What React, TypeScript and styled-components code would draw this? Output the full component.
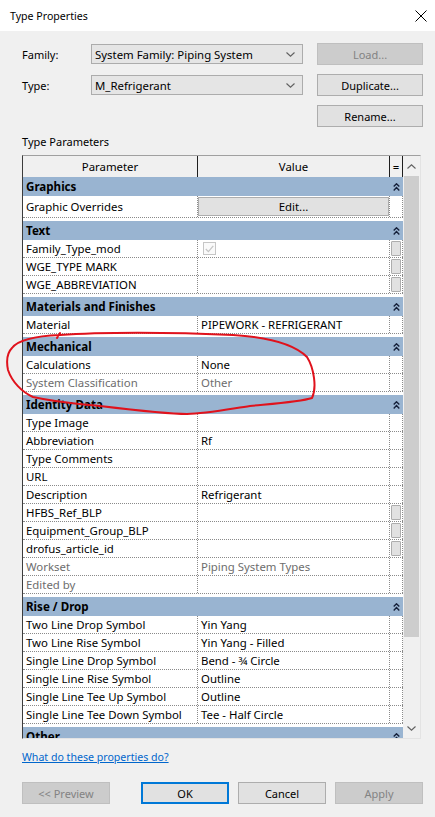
import styled, { createGlobalStyle } from 'styled-components';

const GlobalStyle = createGlobalStyle`
  *, *::before, *::after {
    box-sizing: border-box;
  }
  html, body {
    margin: 0;
    padding: 0;
    background: #f0f0f0;
  }
  body {
    font-family: 'Noto Sans', 'Open Sans', sans-serif;
    font-size: 11.4px;
    color: #000;
  }
`;

type Row = {
    name: string;
    value?: string;
    muted?: boolean;
    eqButton?: boolean;
    checkbox?: boolean;
    editButton?: boolean;
};

type Group = {
    title: string;
    rows: Row[];
};

const groups: Group[] = [
    { title: 'Graphics', rows: [{ name: 'Graphic Overrides', editButton: true }] },
    {
        title: 'Text',
        rows: [
            { name: 'Family_Type_mod', checkbox: true, eqButton: true },
            { name: 'WGE_TYPE MARK', eqButton: true },
            { name: 'WGE_ABBREVIATION', eqButton: true },
        ],
    },
    {
        title: 'Materials and Finishes',
        rows: [{ name: 'Material', value: 'PIPEWORK - REFRIGERANT' }],
    },
    {
        title: 'Mechanical',
        rows: [
            { name: 'Calculations', value: 'None' },
            { name: 'System Classification', value: 'Other', muted: true },
        ],
    },
    {
        title: 'Identity Data',
        rows: [
            { name: 'Type Image' },
            { name: 'Abbreviation', value: 'Rf' },
            { name: 'Type Comments' },
            { name: 'URL' },
            { name: 'Description', value: 'Refrigerant' },
            { name: 'HFBS_Ref_BLP', eqButton: true },
            { name: 'Equipment_Group_BLP', eqButton: true },
            { name: 'drofus_article_id', eqButton: true },
            { name: 'Workset', value: 'Piping System Types', muted: true },
            { name: 'Edited by', muted: true },
        ],
    },
    {
        title: 'Rise / Drop',
        rows: [
            { name: 'Two Line Drop Symbol', value: 'Yin Yang' },
            { name: 'Two Line Rise Symbol', value: 'Yin Yang - Filled' },
            { name: 'Single Line Drop Symbol', value: 'Bend - ¾ Circle' },
            { name: 'Single Line Rise Symbol', value: 'Outline' },
            { name: 'Single Line Tee Up Symbol', value: 'Outline' },
            { name: 'Single Line Tee Down Symbol', value: 'Tee - Half Circle' },
        ],
    },
    { title: 'Other', rows: [] },
];

const Dialog = styled.div`
    position: relative;
    width: 435px;
    height: 817px;
    display: flex;
    flex-direction: column;
    background: #f0f0f0;
    overflow: hidden;
`;

const TitleBar = styled.div`
    height: 31px;
    flex: none;
    background: #fff;
    display: flex;
    align-items: center;
    justify-content: space-between;
    padding: 0 8px 0 10px;
    font-size: 10.6px;
`;

const Body = styled.div`
    flex: 1;
    display: flex;
    flex-direction: column;
    padding: 12px 12px 0 22px;
`;

const TopGrid = styled.div`
    display: grid;
    grid-template-columns: 69px 212px 1fr;
    row-gap: 9px;
    grid-auto-rows: 22px;
    align-items: center;
`;

const Label = styled.span`
    font-size: 11px;
`;

const Combo = styled.div`
    height: 20px;
    border: 1px solid #acacac;
    background: #e5e5e5;
    display: flex;
    align-items: center;
    justify-content: space-between;
    padding: 0 7px 0 3px;
`;

const Button = styled.button<{ $disabled?: boolean; $default?: boolean }>`
    height: 22px;
    padding: 0;
    font-family: inherit;
    font-size: 11px;
    border: ${({ $default }) => ($default ? '2px' : '1px')} solid;
    background: ${({ $disabled }) => ($disabled ? '#cccccc' : '#e1e1e1')};
    border-color: ${({ $disabled, $default }) =>
        $disabled ? '#bfbfbf' : $default ? '#0078d7' : '#adadad'};
    color: ${({ $disabled }) => ($disabled ? '#838383' : '#000')};
`;

const SideButton = styled(Button)`
    width: 106px;
    justify-self: end;
    grid-column: 3;
`;

const SectionLabel = styled.div`
    margin-top: 7px;
    line-height: 16px;
    font-size: 11px;
`;

const Table = styled.div`
    margin: 5px 2px 0 0;
    height: 584px;
    flex: none;
    display: flex;
    background: #fff;
    border: 1px solid #a0a0a0;
    border-left-color: #3c3c3c;
    border-right-color: #e3e3e3;
    border-bottom-color: #e3e3e3;
`;

const GridPane = styled.div`
    width: 380px;
    flex: none;
    display: flex;
    flex-direction: column;
    overflow: hidden;
`;

const Columns = styled.div`
    display: grid;
    grid-template-columns: 175px 192px 13px;
`;

const Header = styled(Columns)`
    height: 21px;
    flex: none;
    background: #f0f0f0;
`;

const HeaderCell = styled.div`
    border-right: 1px solid #1e1e1e;
    display: flex;
    align-items: center;
    justify-content: center;
`;

const GridBody = styled.div`
    flex: 1;
    overflow: hidden;
`;

const GroupBlock = styled.div`
    &:not(:first-child) {
        margin-top: 3px;
    }
`;

const Band = styled.div`
    height: 19px;
    background: #99b4d1;
    display: flex;
    align-items: center;
    justify-content: space-between;
    padding-left: 3px;
    font-weight: 700;
    font-size: 11.6px;
`;

const BandToggle = styled.span`
    width: 13px;
    display: flex;
    justify-content: center;
`;

const RowLine = styled(Columns)<{ $tall?: boolean }>`
    height: ${({ $tall }) => ($tall ? '22px' : '18px')};
    border-bottom: 1px dotted #8a8a8a;
`;

const Cell = styled.div<{ $muted?: boolean }>`
    border-right: 1px dotted #8a8a8a;
    display: flex;
    align-items: center;
    padding-left: 3px;
    white-space: nowrap;
    overflow: hidden;
    color: ${({ $muted }) => ($muted ? '#6d6d6d' : '#000')};
`;

const EqCell = styled.div`
    border-right: 1px dotted #8a8a8a;
    display: flex;
    align-items: stretch;
    padding: 1px;
`;

const EqButton = styled.div`
    flex: 1;
    background: #e1e1e1;
    border: 1px solid #adadad;
    border-radius: 1px;
`;

const EditButton = styled.div`
    flex: 1;
    align-self: stretch;
    margin: 1px 0 1px -3px;
    background: #e1e1e1;
    border: 1px solid #adadad;
    display: flex;
    align-items: center;
    justify-content: center;
`;

const CheckBox = styled.div`
    width: 13px;
    height: 13px;
    margin-left: 2px;
    border: 1px solid #c6c6c6;
    background: #fafafa;
    display: flex;
    align-items: center;
    justify-content: center;
`;

const ScrollBar = styled.div`
    width: 17px;
    flex: none;
    background: #f0f0f0;
    display: flex;
    flex-direction: column;
`;

const ScrollArrow = styled.div`
    height: 20px;
    flex: none;
    display: flex;
    align-items: center;
    justify-content: center;
`;

const ScrollTrack = styled.div`
    flex: 1;
    padding: 0 1px;
`;

const Thumb = styled.div`
    height: 461px;
    background: #cdcdcd;
`;

const HelpLink = styled.a`
    margin-top: 10px;
    line-height: 16px;
    font-size: 10.6px;
    color: #0066cc;
    text-decoration: underline;
    align-self: flex-start;
`;

const Footer = styled.div`
    margin-top: 17px;
    display: flex;
    justify-content: space-between;
`;

const FooterGroup = styled.div`
    display: flex;
    gap: 9px;
`;

const FooterButton = styled(Button)`
    width: 88px;
`;

const Annotation = styled.svg`
    position: absolute;
    left: 0;
    top: 0;
    pointer-events: none;
`;

const Chevron = ({ up = false, color = '#5a5a5a' }: { up?: boolean; color?: string }) => (
    <svg width="9" height="5" viewBox="0 0 9 5">
        <path
            d={up ? 'M0.5 4.5 L4.5 0.8 L8.5 4.5' : 'M0.5 0.5 L4.5 4.2 L8.5 0.5'}
            fill="none"
            stroke={color}
            strokeWidth="1.1"
        />
    </svg>
);

const DoubleUp = () => (
    <svg width="7" height="8" viewBox="0 0 7 8">
        <path d="M0.7 3.6 L3.5 0.8 L6.3 3.6 M0.7 7.4 L3.5 4.6 L6.3 7.4" fill="none" stroke="#15203a" strokeWidth="1.4" />
    </svg>
);

const App = () => {
    return (
        <Dialog>
            <GlobalStyle />
            <TitleBar>
                <span>Type Properties</span>
                <svg width="12" height="12" viewBox="0 0 12 12">
                    <path d="M0.5 0.5 L11.5 11.5 M11.5 0.5 L0.5 11.5" stroke="#000" strokeWidth="1" />
                </svg>
            </TitleBar>
            <Body>
                <TopGrid>
                    <Label>Family:</Label>
                    <Combo>
                        <span>System Family: Piping System</span>
                        <Chevron color="#606060" />
                    </Combo>
                    <SideButton $disabled>Load...</SideButton>
                    <Label>Type:</Label>
                    <Combo>
                        <span>M_Refrigerant</span>
                        <Chevron color="#606060" />
                    </Combo>
                    <SideButton>Duplicate...</SideButton>
                    <SideButton>Rename...</SideButton>
                </TopGrid>
                <SectionLabel>Type Parameters</SectionLabel>
                <Table>
                    <GridPane>
                        <Header>
                            <HeaderCell>Parameter</HeaderCell>
                            <HeaderCell>Value</HeaderCell>
                            <HeaderCell>=</HeaderCell>
                        </Header>
                        <GridBody>
                            {groups.map((group) => (
                                <GroupBlock key={group.title}>
                                    <Band>
                                        <span>{group.title}</span>
                                        <BandToggle>
                                            <DoubleUp />
                                        </BandToggle>
                                    </Band>
                                    {group.rows.map((row) => (
                                        <RowLine key={row.name} $tall={row.editButton}>
                                            <Cell $muted={row.muted}>{row.name}</Cell>
                                            <Cell $muted={row.muted}>
                                                {row.editButton && <EditButton>Edit...</EditButton>}
                                                {row.checkbox && (
                                                    <CheckBox>
                                                        <svg width="9" height="8" viewBox="0 0 9 8">
                                                            <path d="M0.8 4 L3.4 6.6 L8.3 0.8" fill="none" stroke="#c4c4c4" strokeWidth="1.2" />
                                                        </svg>
                                                    </CheckBox>
                                                )}
                                                {row.value}
                                            </Cell>
                                            <EqCell>{row.eqButton && <EqButton />}</EqCell>
                                        </RowLine>
                                    ))}
                                </GroupBlock>
                            ))}
                        </GridBody>
                    </GridPane>
                    <ScrollBar>
                        <ScrollArrow>
                            <Chevron up color="#606060" />
                        </ScrollArrow>
                        <ScrollTrack>
                            <Thumb />
                        </ScrollTrack>
                        <ScrollArrow>
                            <Chevron color="#606060" />
                        </ScrollArrow>
                    </ScrollBar>
                </Table>
                <HelpLink>What do these properties do?</HelpLink>
                <Footer>
                    <FooterButton $disabled>&lt;&lt; Preview</FooterButton>
                    <FooterGroup>
                        <FooterButton $default>OK</FooterButton>
                        <FooterButton>Cancel</FooterButton>
                        <FooterButton $disabled>Apply</FooterButton>
                    </FooterGroup>
                </Footer>
            </Body>
            <Annotation width="435" height="817" viewBox="0 0 435 817">
                <path
                    d="M57 338 L60 333 M60 335 C100 332 170 332 233 335 C265 337 293 343 307 357 C314 368 317 388 312 398 C300 402 270 404 250 406 C230 409 205 414 187 414 C170 414 150 412 100 406 C80 404 60 403 33 397 C22 392 12 382 8 370 C6 360 8 352 12 348 C18 340 35 336 60 335"
                    fill="none"
                    stroke="#e0121c"
                    strokeWidth="2"
                    strokeLinecap="round"
                />
            </Annotation>
        </Dialog>
    );
};

export default App;
